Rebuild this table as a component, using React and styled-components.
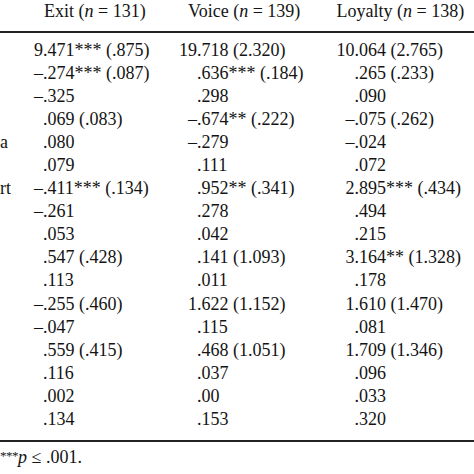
import React from 'react';
import styled, { createGlobalStyle } from 'styled-components';

const GlobalStyle = createGlobalStyle`
  html, body {
    margin: 0;
    padding: 0;
    background: #fff;
    overflow: hidden;
  }
  body {
    font-family: "Liberation Serif", "Times New Roman", serif;
    color: #141414;
  }
`;

const Page = styled.div`
  width: 474px;
  height: 474px;
  overflow: hidden;
  font-size: 18px;
`;

const Grid = styled.div`
  display: grid;
  grid-template-columns: 25px 154px 157.5px 1fr;
  line-height: ${(p) => p.$line || '23px'};
  white-space: nowrap;
`;

const HeadGrid = styled(Grid)`
  height: 23px;
`;

const HeadCell = styled.div`
  padding-left: ${(p) => p.$offset}px;
`;

const Rule = styled.div`
  height: 2px;
  background: #222;
  margin-top: ${(p) => p.$top}px;
`;

const Body = styled(Grid)`
  padding-top: 5.5px;
`;

const Label = styled.div`
  overflow: hidden;
`;

const Cell = styled.div`
  display: flex;
`;

const IntPart = styled.span`
  display: inline-block;
  width: 18px;
  text-align: right;
`;

const Note = styled.div`
  margin-top: 4px;
  line-height: 23px;
`;

const Stars = styled.sup`
  font-size: 13px;
  vertical-align: 3px;
  line-height: 0;
  letter-spacing: -0.5px;
`;

const rows = [
  ['', '9.471*** (.875)', '19.718 (2.320)', '10.064 (2.765)'],
  ['', '–.274*** (.087)', '.636*** (.184)', '.265 (.233)'],
  ['', '–.325', '.298', '.090'],
  ['', '.069 (.083)', '–.674** (.222)', '–.075 (.262)'],
  ['a', '.080', '–.279', '–.024'],
  ['', '.079', '.111', '.072'],
  ['rt', '–.411*** (.134)', '.952** (.341)', '2.895*** (.434)'],
  ['', '–.261', '.278', '.494'],
  ['', '.053', '.042', '.215'],
  ['', '.547 (.428)', '.141 (1.093)', '3.164** (1.328)'],
  ['', '.113', '.011', '.178'],
  ['', '–.255 (.460)', '1.622 (1.152)', '1.610 (1.470)'],
  ['', '–.047', '.115', '.081'],
  ['', '.559 (.415)', '.468 (1.051)', '1.709 (1.346)'],
  ['', '.116', '.037', '.096'],
  ['', '.002', '.00', '.033'],
  ['', '.134', '.153', '.320'],
];

function Num({ value }) {
  const i = value.indexOf('.');
  return (
    <Cell>
      <IntPart>{value.slice(0, i)}</IntPart>
      <span>{value.slice(i)}</span>
    </Cell>
  );
}

export default function App() {
  return (
    <Page>
      <GlobalStyle />
      <HeadGrid>
        <div />
        <HeadCell $offset={19}>
          Exit (<i>n</i> = 131)
        </HeadCell>
        <HeadCell $offset={9}>
          Voice (<i>n</i> = 139)
        </HeadCell>
        <HeadCell $offset={-3}>
          Loyalty (<i>n</i> = 138)
        </HeadCell>
      </HeadGrid>
      <Rule $top={8} />
      <Body $line="23.1px">
        {rows.map((r, idx) => (
          <React.Fragment key={idx}>
            <Label>{r[0]}</Label>
            <Num value={r[1]} />
            <Num value={r[2]} />
            <Num value={r[3]} />
          </React.Fragment>
        ))}
      </Body>
      <Rule $top={8.5} />
      <Note>
        <Stars>***</Stars>
        <i>p</i> ≤ .001.
      </Note>
    </Page>
  );
}
